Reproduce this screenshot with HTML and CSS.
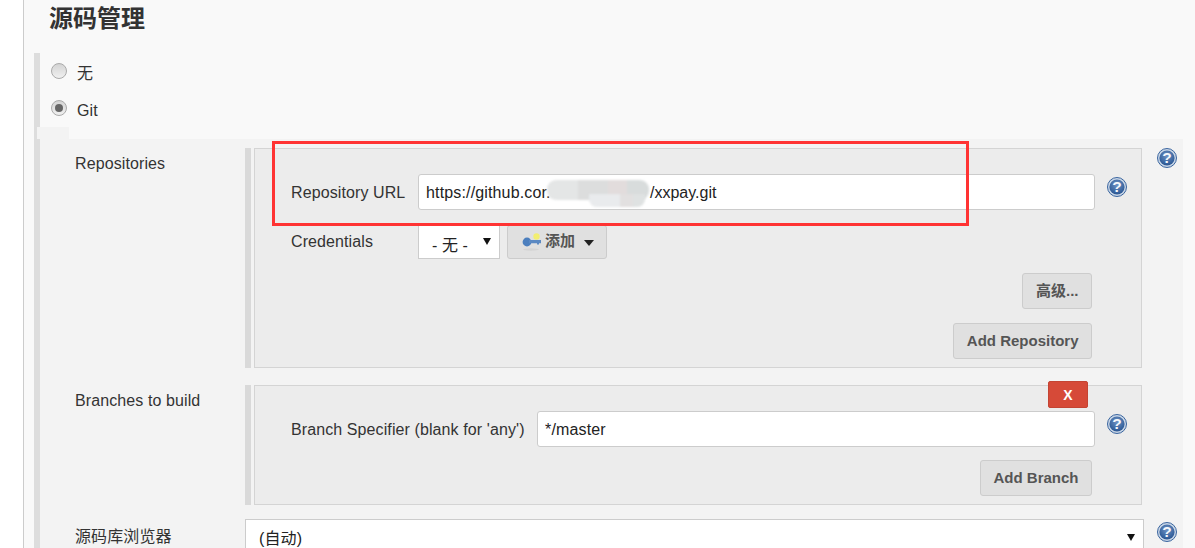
FILE: index.html
```html
<!DOCTYPE html>
<html lang="zh">
<head>
  <meta charset="UTF-8" />
  <title>源码管理</title>
  <link rel="stylesheet" href="styles.css">
</head>
<body>
  <svg class="defs" width="0" height="0">
    <defs>
      <radialGradient id="helpFill" cx="50%" cy="35%" r="65%">
        <stop offset="0%" stop-color="#6f93c4" />
        <stop offset="75%" stop-color="#3a659f" />
        <stop offset="100%" stop-color="#2a5592" />
      </radialGradient>
      <symbol id="help" viewBox="0 0 20 20">
        <circle cx="10" cy="10" r="9.5" fill="#c9d6e6" stroke="#3a659f" stroke-width="1" />
        <circle cx="10" cy="10" r="7.6" fill="url(#helpFill)" />
        <text x="10" y="15.4" text-anchor="middle" font-family="Liberation Sans, sans-serif" font-size="15.5" font-weight="700" fill="#f4f7fb">?</text>
      </symbol>
    </defs>
  </svg>

  <div class="page">
    <h2 class="title">源码管理</h2>

    <div class="scm">
      <label class="radio-row"><span class="radio"></span>无</label>
      <label class="radio-row"><span class="radio checked"></span><span class="git-label">Git</span></label>
      <div class="git-tab"></div>

      <div class="git-panel">
        <div class="row">
          <div class="row-label">Repositories</div>
          <div class="repeat">
            <div class="handle"></div>
            <div class="box repo-box">
              <div class="field url-field">
                <span class="field-label">Repository URL</span>
                <input class="text-input" type="text" value="https://github.cor.">
                <svg class="help"><use href="#help" /></svg>
                <span class="url-rest">/xxpay.git</span>
                <div class="smudge"></div>
                <div class="smudge lower"></div>
              </div>
              <div class="field cred-field">
                <span class="field-label">Credentials</span>
                <div class="cred-select">- 无 -<span class="arrow"></span></div>
                <button class="btn add-cred">
                  <svg class="key" viewBox="0 0 20 18">
                    <ellipse cx="9" cy="16.5" rx="8" ry="1.2" fill="#d4d4d4" />
                    <circle cx="14.5" cy="3.5" r="3.2" fill="#f2ee70" />
                    <circle cx="5" cy="9" r="4.4" fill="#4c7fbe" />
                    <path d="M7 7h12v3.2h-2v1.4h-2v-1.4H7z" fill="#5b89c2" />
                  </svg>
                  <span class="cjk">添加</span>
                  <span class="arrow small"></span>
                </button>
              </div>
              <div class="btn-row"><button class="btn"><span class="cjk">高级...</span></button></div>
              <div class="btn-row"><button class="btn">Add Repository</button></div>
            </div>
          </div>
          <svg class="help outer"><use href="#help" /></svg>
        </div>

        <div class="row branches">
          <div class="row-label">Branches to build</div>
          <div class="repeat">
            <div class="handle"></div>
            <div class="box branch-box">
              <button class="delete-btn">X</button>
              <div class="field">
                <span class="field-label">Branch Specifier (blank for 'any')</span>
                <input class="text-input" type="text" value="*/master">
                <svg class="help"><use href="#help" /></svg>
              </div>
              <div class="btn-row branch-btn"><button class="btn">Add Branch</button></div>
            </div>
          </div>
        </div>

        <div class="row browser">
          <div class="row-label">源码库浏览器</div>
          <div class="browser-select">(自动)<span class="arrow"></span></div>
          <svg class="help outer"><use href="#help" /></svg>
        </div>
      </div>
    </div>
  </div>

  <div class="red-box"></div>
</body>
</html>
```

FILE: styles.css
```css
* {
  box-sizing: border-box;
}

html, body {
  margin: 0;
  height: 548px;
  overflow: hidden;
}

body {
  background: #fff;
  color: #333;
  font-family: "Liberation Sans", "Noto Sans CJK SC", sans-serif;
  font-size: 16px;
  letter-spacing: 0.1px;
  position: relative;
}

.defs {
  position: absolute;
}

.page {
  margin-left: 23px;
  height: 548px;
  border-left: 1px solid #ccc;
  background: #f9f9f9;
  overflow: hidden;
}

.title {
  margin: 0;
  padding: 4px 0 0 25px;
  height: 53px;
  font-size: 24px;
  line-height: 30px;
  font-weight: 700;
  letter-spacing: 0;
}

.scm {
  margin-left: 10px;
  border-left: 6px solid #ddd;
}

.radio-row {
  display: flex;
  align-items: center;
  height: 37px;
  padding-left: 11px;
  gap: 10px;
}

.radio {
  width: 16px;
  height: 16px;
  border-radius: 50%;
  border: 1px solid #aaa;
  background: linear-gradient(#d4d4d4, #f0f0f0);
  margin-top: -1px;
  position: relative;
}

.radio.checked::after {
  content: "";
  position: absolute;
  left: 3px;
  top: 3px;
  width: 8px;
  height: 8px;
  border-radius: 50%;
  background: #666;
}

.git-label {
  margin-top: 4px;
}

.git-tab {
  margin-left: -3px;
  width: 32px;
  height: 12px;
  background: #f3f3f3;
}

.git-panel {
  width: 1143px;
  background: #f3f3f3;
  padding: 9px 0 0 0;
}

.row {
  display: flex;
  align-items: flex-start;
}

.row-label {
  width: 205px;
  padding: 7px 0 0 35px;
  flex: none;
}

.repeat {
  display: flex;
  gap: 3px;
  width: 897px;
}

.handle {
  width: 6px;
  background: #d9d9d9;
}

.box {
  flex: 1;
  border: 1px solid #d4d4d4;
  background: #ececec;
  padding-left: 36px;
  position: relative;
}

.repo-box {
  height: 220px;
  padding-top: 25px;
}

.branch-box {
  height: 120px;
  padding-top: 25px;
}

.field {
  display: flex;
  align-items: center;
  position: relative;
}

.field-label {
  flex: none;
  width: 115px;
  margin-right: 12px;
  white-space: nowrap;
}

.url-field .field-label,
.branch-box .field-label {
  padding-top: 2px;
}

.branch-box .field-label {
  width: 234px;
}

.text-input {
  flex: none;
  height: 36px;
  border: 1px solid #ccc;
  border-radius: 3px;
  background: #fff;
  padding: 2px 7px 0;
  font: inherit;
  color: #222;
  letter-spacing: 0.15px;
}

.url-field .text-input {
  width: 677px;
}

.branch-box .text-input {
  width: 558px;
}

.help {
  width: 20px;
  height: 20px;
  margin: 3px 0 0 12px;
  align-self: flex-start;
  flex: none;
}

.help.outer {
  margin: 0 0 0 15px;
}

.url-rest {
  position: absolute;
  left: 359px;
  top: 10px;
  color: #222;
  letter-spacing: 0;
}

.smudge {
  position: absolute;
  left: 256px;
  top: 6px;
  width: 102px;
  height: 20px;
  border-radius: 9px;
  background: linear-gradient(90deg, #e4e6e6 0 30%, #dcdddd 30% 60%, #e2dcdc 60% 78%, #d8dcdc 78%);
  filter: blur(1px);
}

.smudge.lower {
  left: 298px;
  top: 20px;
  width: 56px;
  height: 13px;
  border-radius: 0 0 8px 8px;
  background: linear-gradient(90deg, #e9ebed 0 55%, #e2e0e0 55% 78%, #dfe2e2 78%);
}

.cred-field {
  margin-top: 15px;
}

.cred-select {
  width: 82px;
  height: 34px;
  margin-right: 7px;
  border: 1px solid #ccc;
  background: #fff;
  color: #222;
  display: flex;
  align-items: center;
  padding: 3px 0 0 13px;
  position: relative;
}

.arrow {
  position: absolute;
  right: 8px;
  top: 12px;
  border-left: 4px solid transparent;
  border-right: 4px solid transparent;
  border-top: 7px solid #111;
}

.btn {
  height: 36px;
  padding: 0 12.5px 2px;
  border: 1px solid #ccc;
  border-radius: 3px;
  background: #e0e0e0;
  color: #555;
  font-family: inherit;
  font-size: 15px;
  font-weight: 700;
  letter-spacing: 0;
}

.cjk {
  position: relative;
  top: -1px;
}

.add-cred {
  width: 100px;
  height: 34px;
  padding: 0 0 0 14px;
  display: flex;
  align-items: center;
  gap: 3px;
  position: relative;
}

.key {
  width: 20px;
  height: 18px;
}

.add-cred .cjk {
  top: -3px;
}

.arrow.small {
  right: 12px;
  top: 14px;
  border-left-width: 5px;
  border-right-width: 5px;
  border-top-width: 6px;
  border-top-color: #222;
}

.btn-row {
  display: flex;
  justify-content: flex-end;
  padding-right: 49px;
  margin-top: 14px;
}

.branch-btn {
  margin-top: 13px;
}

.delete-btn {
  position: absolute;
  right: 53px;
  top: -5px;
  width: 40px;
  height: 27px;
  border: 1px solid #c44433;
  border-radius: 2px;
  background: #d64a38;
  color: #fff;
  font-family: inherit;
  font-size: 14px;
  font-weight: 700;
  z-index: 1;
}

.branches {
  margin-top: 17px;
}

.browser {
  margin-top: 14px;
}

.browser-select {
  width: 899px;
  height: 29px;
  flex: none;
  border: 1px solid #ccc;
  border-bottom: 0;
  background: #fff;
  color: #222;
  padding: 12px 0 0 13px;
  line-height: 14px;
  position: relative;
  margin-right: -2px;
}

.browser-select .arrow {
  top: 14px;
}

.browser .row-label {
  padding-top: 10px;
  line-height: 16px;
}

.browser .help.outer {
  margin-top: 3px;
}

.red-box {
  position: absolute;
  left: 272px;
  top: 141px;
  width: 697px;
  height: 85px;
  border: 3px solid #f33;
}
```
